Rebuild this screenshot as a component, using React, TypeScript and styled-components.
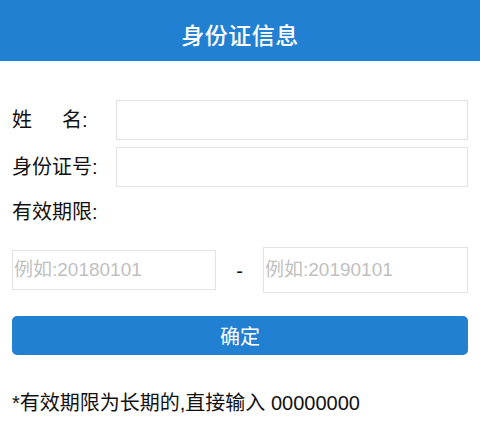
import React from "react";
import styled, { createGlobalStyle } from "styled-components";

const Global = createGlobalStyle`
  html, body { margin: 0; padding: 0; background: #fff; }
  body { font-family: "Liberation Sans", "Noto Sans CJK SC", sans-serif; color: #111; }
  * { box-sizing: border-box; }
`;

const Page = styled.div`
  width: 480px;
  height: 436px;
  background: #fff;
  display: flex;
  flex-direction: column;
`;

const Header = styled.header`
  height: 61px;
  background: #2180d1;
  color: #fff;
  font-size: 23px;
  font-weight: 500;
  display: flex;
  align-items: center;
  justify-content: center;
  padding-top: 6px;
  letter-spacing: 0.5px;
`;

const Form = styled.div`
  display: flex;
  flex-direction: column;
  padding: 39px 12px 0 12px;
`;

const Row = styled.div<{ $mt?: number }>`
  display: flex;
  align-items: center;
  margin-top: ${(p) => p.$mt ?? 0}px;
`;

const Label = styled.label`
  width: 104px;
  flex: none;
  font-size: 20px;
  line-height: 24px;
  display: flex;
`;

const Spacer = styled.span`
  width: 30px;
`;

const Field = styled.input<{ $h?: number }>`
  flex: 1;
  min-width: 0;
  height: ${(p) => p.$h ?? 40}px;
  border: 1px solid #e3e3e3;
  border-radius: 0;
  outline: none;
  padding: 0 1px;
  font-family: inherit;
  font-size: 19px;
  color: #111;
  background: #fff;
  &::placeholder { color: #bfbfbf; }
`;

const Section = styled.div`
  font-size: 20px;
  line-height: 24px;
  margin-top: 13px;
`;

const DateRow = styled.div`
  display: flex;
  align-items: center;
  margin-top: 23px;
`;

const DateField = styled(Field)`
  flex: none;
  width: ${(p) => (p.$h === 46 ? 205 : 204)}px;
`;

const Dash = styled.span`
  flex: 1;
  text-align: center;
  font-size: 20px;
  padding-top: 3px;
`;

const Button = styled.button`
  margin-top: 23px;
  height: 39px;
  border: none;
  border-radius: 5px;
  background: #2180d1;
  color: #fff;
  font-family: inherit;
  font-size: 20px;
  display: flex;
  align-items: center;
  justify-content: center;
`;

const Note = styled.p`
  margin: 36px 0 0 0;
  font-size: 20px;
  line-height: 24px;
`;

export default function App() {
  return (
    <Page>
      <Global />
      <Header>身份证信息</Header>
      <Form>
        <Row>
          <Label>
            姓<Spacer />名:
          </Label>
          <Field type="text" />
        </Row>
        <Row $mt={7}>
          <Label>身份证号:</Label>
          <Field type="text" />
        </Row>
        <Section>有效期限:</Section>
        <DateRow>
          <DateField type="text" placeholder="例如:20180101" />
          <Dash>-</Dash>
          <DateField type="text" $h={46} placeholder="例如:20190101" />
        </DateRow>
        <Button type="button">确定</Button>
        <Note>*有效期限为长期的,直接输入 00000000</Note>
      </Form>
    </Page>
  );
}
